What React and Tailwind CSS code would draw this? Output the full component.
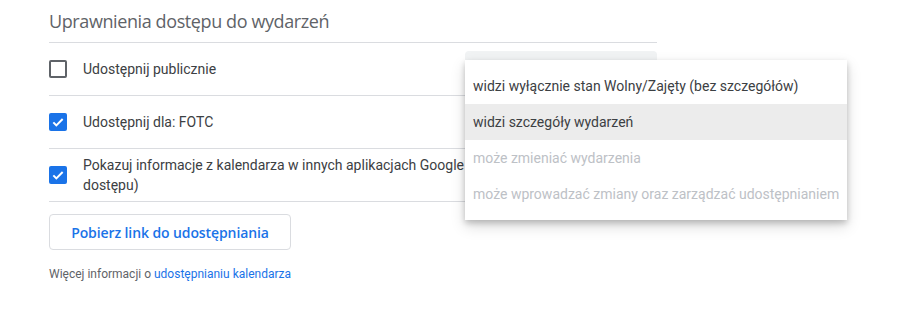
import React from 'react';

const Checkbox = ({ checked }) =>
  checked ? (
    <span className="flex h-[18px] w-[18px] shrink-0 items-center justify-center rounded-[2px] bg-[#1a73e8]">
      <svg viewBox="0 0 24 24" className="h-[16px] w-[16px]" fill="none" stroke="white" strokeWidth="3">
        <path d="M5 12.5l4.5 4.5L19 7.5" />
      </svg>
    </span>
  ) : (
    <span className="block h-[18px] w-[18px] shrink-0 rounded-[2px] border-2 border-[#5f6368]" />
  );

const options = [
  { label: 'widzi wyłącznie stan Wolny/Zajęty (bez szczegółów)' },
  { label: 'widzi szczegóły wydarzeń', active: true },
  { label: 'może zmieniać wydarzenia', disabled: true },
  { label: 'może wprowadzać zmiany oraz zarządzać udostępnianiem', disabled: true },
];

const App = () => {
  return (
    <div className="relative h-[321px] w-[911px] overflow-hidden bg-white font-['Roboto',sans-serif]">
      <div className="w-[608px] ml-[49px] pt-[9px]">
        <h2 className="text-[18px] leading-[24px] text-[#5f6368] font-['Open_Sans',sans-serif] tracking-[-0.4px] pb-[9px] border-b border-[#dadce0]">
          Uprawnienia dostępu do wydarzeń
        </h2>

        <div className="flex h-[53px] items-center border-b border-[#dadce0]">
          <Checkbox />
          <span className="ml-[16px] text-[14px] text-[#3c4043]">Udostępnij publicznie</span>
          <div className="ml-auto h-[36px] w-[192px] rounded-[4px] bg-[#f1f3f4]" />
        </div>

        <div className="flex h-[53px] items-center border-b border-[#dadce0]">
          <Checkbox checked />
          <span className="ml-[16px] text-[14px] text-[#3c4043]">Udostępnij dla: FOTC</span>
        </div>

        <div className="flex h-[53px] items-center border-b border-[#dadce0]">
          <Checkbox checked />
          <span className="ml-[16px] w-[560px] text-[14px] leading-[20px] text-[#3c4043]">
            Pokazuj informacje z kalendarza w innych aplikacjach Google (zgodnie z ustawieniami dostępu)
          </span>
        </div>

        <button className="mt-[12px] h-[36px] w-[242px] rounded-[4px] border border-[#dadce0] bg-white text-[14px] font-semibold text-[#1a73e8] font-['Open_Sans',sans-serif] tracking-[-0.1px]">
          Pobierz link do udostępniania
        </button>

        <p className="mt-[15px] text-[12px] text-[#5f6368]">
          Więcej informacji o <span className="text-[#1a73e8]">udostępnianiu kalendarza</span>
        </p>
      </div>

      <div className="absolute left-[465px] top-[60px] w-[382px] bg-white py-[8px] shadow-[0_3px_6px_rgba(0,0,0,0.2),0_6px_14px_rgba(0,0,0,0.15)]">
        {options.map((o) => (
          <div
            key={o.label}
            className={`flex h-[36px] items-center whitespace-nowrap px-[8px] text-[14px] ${
              o.active ? 'bg-[#ececec]' : ''
            } ${o.disabled ? 'text-[#bdc1c6]' : 'text-[#3c4043]'}`}
          >
            {o.label}
          </div>
        ))}
      </div>
    </div>
  );
};

export default App;
